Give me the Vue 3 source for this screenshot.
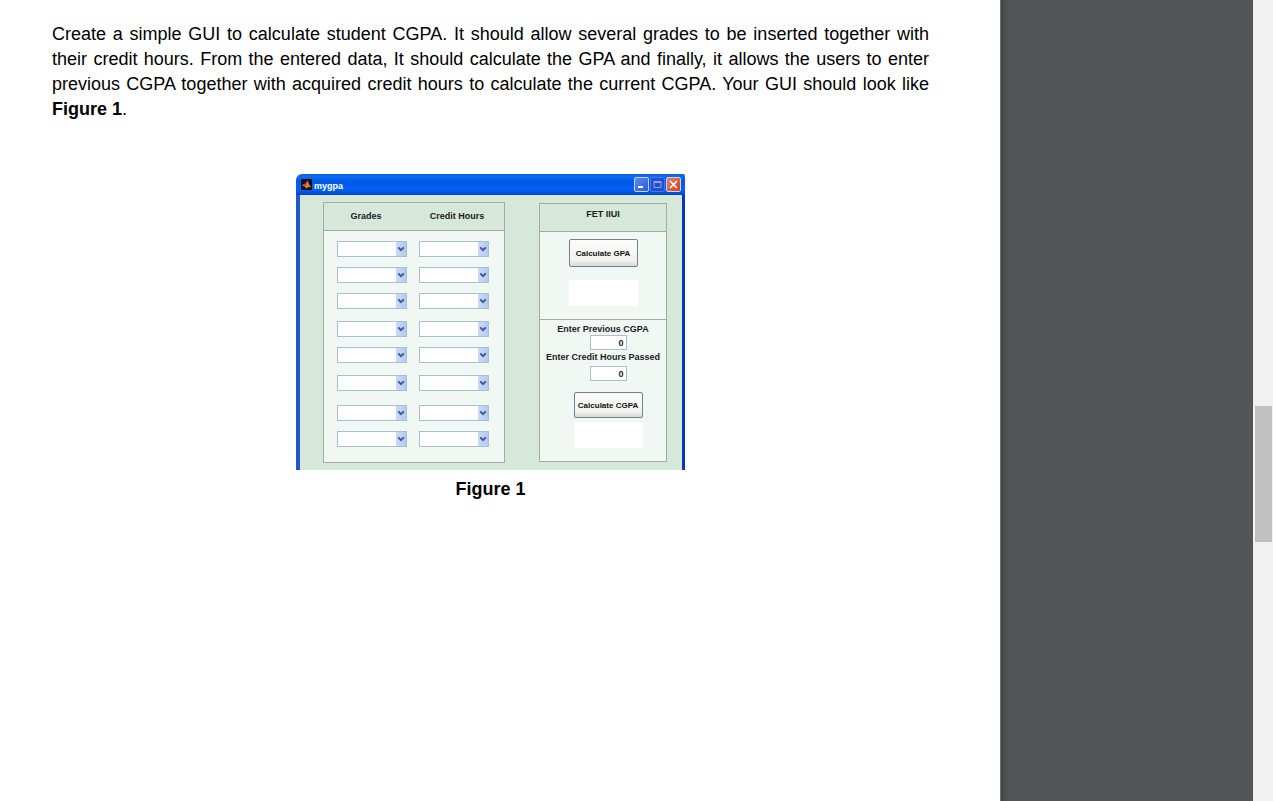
<script setup>
import { ref } from 'vue'

const columns = ['Grades', 'Credit Hours']
const rowCount = 8
const previousCgpa = ref('0')
const creditsPassed = ref('0')
</script>

<template>
  <div class="viewer">
    <main class="page">
      <p class="task">
        Create a simple GUI to calculate student CGPA. It should allow several grades to be inserted
        together with their credit hours. From the entered data, It should calculate the GPA and
        finally, it allows the users to enter previous CGPA together with acquired credit hours to
        calculate the current CGPA. Your GUI should look like <b>Figure 1</b>.
      </p>

      <figure class="figure">
        <div class="window">
          <header class="titlebar">
            <svg class="logo" viewBox="0 0 11 11" aria-hidden="true">
              <rect width="11" height="11" fill="#10131c" />
              <path d="M0.8 6.2 L3.6 4.8 L5 6 L3.2 7.6 Z" fill="#5f93c4" />
              <path d="M3.6 4.8 L6.4 1.4 L5.8 6.4 L3.2 7.6 Z" fill="#a33a1c" />
              <path d="M6.4 1.4 C7.4 3 8.4 6.4 10.2 8.6 C8.6 7.6 7.6 7.6 5.2 9.6 C4.8 8.4 4.2 7.8 3.2 7.6 C5 6.6 5.6 3.4 6.4 1.4 Z" fill="#e8793a" />
            </svg>
            <span class="title">mygpa</span>
            <button class="control" type="button" aria-label="Minimize">
              <svg viewBox="0 0 13 13"><rect x="3" y="8" width="5" height="2" fill="#fff" /></svg>
            </button>
            <button class="control dim" type="button" aria-label="Maximize">
              <svg viewBox="0 0 13 13"><path d="M3 3.5 H10 V9.5 H3 Z M3 4.5 H10" fill="none" stroke="#86a5f0" /></svg>
            </button>
            <button class="control close" type="button" aria-label="Close">
              <svg viewBox="0 0 13 13"><path d="M3 3 L10 10 M10 3 L3 10" stroke="#fff" stroke-width="1.6" /></svg>
            </button>
          </header>

          <div class="client">
            <section class="panel entries">
              <div class="head heads">
                <span v-for="c in columns" :key="c">{{ c }}</span>
              </div>
              <div class="grid">
                <template v-for="r in rowCount" :key="r">
                  <span v-for="c in columns" :key="c" class="combo">
                    <select :aria-label="`${c} ${r}`"><option></option></select>
                    <svg class="arrow" viewBox="0 0 10 14" aria-hidden="true">
                      <path d="M2.2 5.4 L5 8.2 L7.8 5.4" fill="none" stroke="#43598f" stroke-width="2" />
                    </svg>
                  </span>
                </template>
              </div>
            </section>

            <section class="panel results">
              <div class="head">FET IIUI</div>
              <div class="part gpa">
                <button class="action" type="button">Calculate GPA</button>
                <output class="result"></output>
              </div>
              <div class="part cgpa">
                <label for="prev">Enter Previous CGPA</label>
                <div class="shift"><input id="prev" v-model="previousCgpa" type="text" /></div>
                <label for="passed">Enter Credit Hours Passed</label>
                <div class="shift lower">
                  <input id="passed" v-model="creditsPassed" type="text" />
                  <button class="action" type="button">Calculate CGPA</button>
                  <output class="result"></output>
                </div>
              </div>
            </section>
          </div>
        </div>
        <figcaption>Figure 1</figcaption>
      </figure>
    </main>
    <div class="backdrop"></div>
    <div class="scrollbar"><div class="thumb"></div></div>
  </div>
</template>

<style>
body {
  margin: 0;
}
</style>

<style scoped>
* {
  box-sizing: border-box;
}
.viewer {
  display: grid;
  grid-template-columns: 1000fr 253fr 20px;
  min-height: 100vh;
  font-family: "Liberation Sans", Arial, sans-serif;
  color: #000;
  background: #fff;
}
.page {
  padding: 22px 71px 0 52px;
}
.backdrop {
  background: linear-gradient(to right, #6d7072 0, #6d7072 1px, #3f4447 1px, #4a4f52 5px, #525659 9px);
}
.scrollbar {
  display: grid;
  grid-template-rows: 406fr 136fr 259fr;
  padding: 0 1px 0 2px;
  background: #f1f1f1;
}
.thumb {
  grid-row: 2;
  background: #c1c1c1;
}
.task {
  margin: 0;
  font-size: 18px;
  line-height: 25px;
  text-align: justify;
}
.figure {
  margin: 52px 0 0;
  display: flex;
  flex-direction: column;
  align-items: center;
}
figcaption {
  margin-top: 7px;
  font-size: 18px;
  line-height: 25px;
  font-weight: bold;
}
.window {
  width: 100%;
  max-width: 389px;
  font-size: 9px;
  font-weight: bold;
  color: #1c211e;
}
.titlebar {
  display: flex;
  align-items: center;
  gap: 1px;
  height: 21px;
  padding: 0 4px 0 5px;
  border-radius: 6px 2px 0 0;
  background: linear-gradient(#1263d8 0, #0a6cf4 3px, #0358e6 7px, #0560f6 15px, #0253dc 19px, #0143b8 21px);
}
.logo {
  width: 11px;
  height: 11px;
}
.title {
  flex: 1;
  padding: 2px 0 0 1px;
  color: #fff;
}
.control {
  width: 15px;
  height: 15px;
  padding: 0;
  border: 1px solid #c3d3f8;
  border-radius: 2px;
  background: linear-gradient(135deg, #5e8bf2, #2b5ad8);
}
.control svg {
  display: block;
  width: 13px;
  height: 13px;
}
.control.dim {
  border-color: #4774e8;
  background: #1f50d4;
}
.control.close {
  background: linear-gradient(135deg, #e98265, #cf3f1a);
}
.client {
  display: flex;
  justify-content: space-between;
  align-items: flex-start;
  padding: 7px 15px 7px 23px;
  border-left: 4px solid #2158cf;
  border-right: 3px solid #0a35bd;
  background: #d6e8da;
}
.panel {
  border: 1px solid #a3aaa5;
  background: #f1f7f3;
}
.entries {
  width: 182px;
}
.results {
  width: 128px;
  margin-top: 1px;
}
.head {
  height: 28px;
  padding-top: 4px;
  border-bottom: 1px solid #a3aaa5;
  background: #d6e8da;
  line-height: 12px;
  text-align: center;
}
.heads {
  display: grid;
  grid-template-columns: 84px 98px;
  padding-top: 7px;
}
.grid {
  display: grid;
  grid-template-columns: 70px 70px;
  grid-template-rows: 26px 26px 28px 26px 28px 30px 26px 16px;
  column-gap: 12px;
  padding: 10px 13px 15px;
}
.combo {
  position: relative;
  height: 16px;
}
.combo select {
  display: block;
  width: 100%;
  height: 100%;
  appearance: none;
  border: 1px solid #a5bfd3;
  border-radius: 0;
  background: #fff;
}
.arrow {
  position: absolute;
  top: 1px;
  right: 1px;
  width: 10px;
  height: 14px;
  background: linear-gradient(to right, #cbdafa, #b4c9f2);
  pointer-events: none;
}
.part {
  display: flex;
  flex-direction: column;
  align-items: center;
}
.gpa {
  height: 88px;
  padding-top: 7px;
  gap: 13px;
  border-bottom: 1px solid #a3aaa5;
}
.cgpa {
  height: 141px;
  padding-top: 3px;
}
.cgpa label {
  line-height: 12px;
  white-space: nowrap;
}
.shift {
  display: flex;
  flex-direction: column;
  align-items: center;
  padding-left: 10px;
}
.shift input {
  width: 37px;
  height: 15px;
  margin-bottom: 1px;
  padding: 0 2px;
  border: 1px solid #a9c0d2;
  background: #fff;
  font: inherit;
  color: inherit;
  text-align: right;
}
.lower {
  padding-top: 3px;
}
.lower input {
  margin-bottom: 11px;
}
.action {
  width: 69px;
  height: 28px;
  padding: 0;
  border: 1px solid #6c8498;
  border-radius: 2px;
  background: linear-gradient(#fdfdfc 0, #f1f1ee 80%, #d9d8d2 100%);
  font: inherit;
  font-size: 8px;
  color: #111;
  white-space: nowrap;
}
.result {
  width: 69px;
  height: 26px;
  background: #fff;
}
.lower .action {
  height: 26px;
  margin-bottom: 4px;
}
</style>
